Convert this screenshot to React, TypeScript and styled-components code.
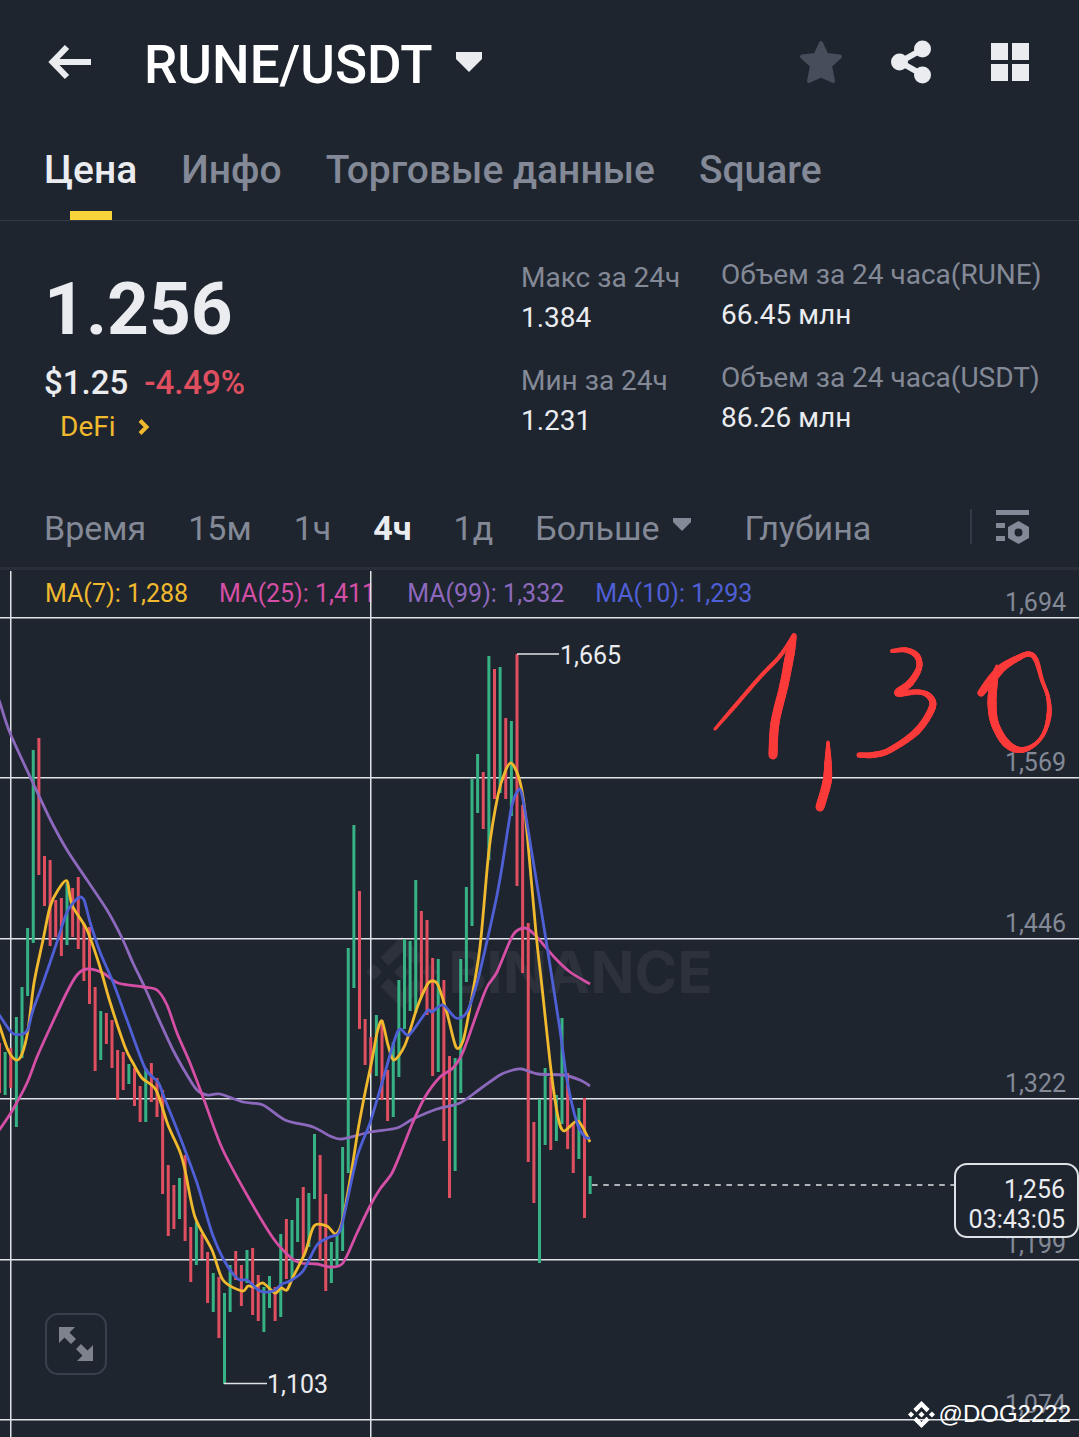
import React from 'react';
import styled, { createGlobalStyle } from 'styled-components';

const color = {
  bg: '#1f252f',
  text: '#eaecf0',
  muted: '#838996',
  dim: '#474d5b',
  line: '#343a45',
  band: '#292e3a',
  grid: '#dfe2e6',
  accent: '#f8d33a',
  yellow: '#f0b92e',
  up: '#36b284',
  down: '#e04f60',
  pink: '#d44fa5',
  violet: '#8d69bd',
  blue: '#4f5fd6',
  pen: '#fb3a3a',
};

const GlobalStyle = createGlobalStyle`
  *, *::before, *::after { box-sizing: border-box; }
  body {
    margin: 0;
    background: ${color.bg};
    color: ${color.text};
    font-family: Roboto, 'Noto Sans', sans-serif;
  }
  button { font: inherit; color: inherit; background: none; border: 0; padding: 0; cursor: pointer; }
  svg { display: block; }
`;

const Page = styled.main`
  display: flex;
  flex-direction: column;
  min-height: 100vh;
`;

const Header = styled.header`
  display: flex;
  align-items: center;
  height: 124px;
  padding: 0 48px;
`;

const PairButton = styled.button`
  display: flex;
  align-items: center;
  gap: 23px;
  margin-left: 52px;
`;

const PairName = styled.h1`
  margin: 0;
  font-size: 53px;
  line-height: 60px;
  font-weight: 500;
  color: #fff;
  padding-top: 5px;
`;

const HeaderActions = styled.div`
  display: flex;
  align-items: center;
  gap: 48px;
  margin-left: auto;
`;

const IconButton = styled.button`
  display: flex;
  align-items: center;
  justify-content: center;
`;

const Tabs = styled.nav`
  display: flex;
  gap: 44px;
  height: 97px;
  padding: 0 44px;
  border-bottom: 1px solid ${color.line};
`;

const Tab = styled.button<{ $active?: boolean }>`
  position: relative;
  height: 96px;
  padding-bottom: 4px;
  font-size: 39px;
  line-height: 44px;
  font-weight: 500;
  color: ${(p) => (p.$active ? color.text : color.muted)};

  &::after {
    content: '';
    position: absolute;
    left: calc(50% - 21px);
    bottom: 0;
    width: 42px;
    height: 9px;
    background: ${(p) => (p.$active ? color.accent : 'transparent')};
  }
`;

const Summary = styled.section`
  display: grid;
  grid-template-columns: 1fr 200px 314px;
  height: 264px;
  padding: 34px 44px 0;
`;

const PriceColumn = styled.div`
  padding-top: 14px;
`;

const Price = styled.div`
  font-size: 73px;
  line-height: 80px;
  font-weight: 700;
`;

const PriceMeta = styled.div`
  display: flex;
  gap: 16px;
  margin-top: 12px;
  font-size: 33px;
  line-height: 44px;
  font-weight: 500;
`;

const Change = styled.span`
  color: ${color.down};
`;

const Category = styled.a`
  display: inline-flex;
  align-items: center;
  gap: 22px;
  padding-left: 16px;
  font-size: 28px;
  line-height: 44px;
  color: ${color.yellow};
  text-decoration: none;
`;

const Stats = styled.dl<{ $offset?: boolean }>`
  margin: 0;
  padding-top: ${(p) => (p.$offset ? '3px' : '0')};
  font-size: 28px;
  line-height: 40px;
  white-space: nowrap;
`;

const StatLabel = styled.dt`
  color: ${color.muted};
`;

const StatValue = styled.dd`
  margin: 0 0 23px;
`;

const Intervals = styled.div`
  display: flex;
  align-items: center;
  gap: 42px;
  height: 85px;
  padding: 0 49px 0 44px;
  border-bottom: 3px solid ${color.band};
`;

const Interval = styled.button<{ $active?: boolean }>`
  display: flex;
  align-items: center;
  gap: 13px;
  padding-top: 4px;
  font-size: 34px;
  line-height: 40px;
  font-weight: ${(p) => (p.$active ? 700 : 400)};
  color: ${(p) => (p.$active ? color.text : color.muted)};
`;

const DepthButton = styled(Interval)`
  margin-left: 10px;
`;

const IntervalTools = styled.div`
  display: flex;
  align-items: center;
  gap: 23px;
  margin-left: auto;
  padding-left: 23px;
  height: 35px;
  border-left: 2px solid ${color.line};
`;

const Chart = styled.section`
  position: relative;
  flex: 1 0 867px;
  overflow: hidden;
`;

const Watermark = styled.div`
  position: absolute;
  top: 364px;
  left: 0;
  right: 0;
  display: flex;
  align-items: center;
  justify-content: center;
  gap: 10px;
  font-family: Inter, sans-serif;
  font-size: 58px;
  line-height: 76px;
  font-weight: 700;
  color: #2c313c;
`;

const Plot = styled.svg`
  position: absolute;
  inset: 0;
  width: 100%;
  height: 100%;
`;

const Legend = styled.div`
  position: relative;
  display: flex;
  gap: 31px;
  padding: 9px 45px 0;
  font-size: 25px;
  line-height: 30px;
`;

const LegendItem = styled.span<{ $color: string }>`
  color: ${(p) => p.$color};
`;

const AxisLabel = styled.span`
  position: absolute;
  right: 13px;
  font-size: 25px;
  line-height: 28px;
  color: ${color.muted};
`;

const LastPrice = styled.div`
  position: absolute;
  top: 593px;
  right: 0;
  padding: 10px 12px 1px 13px;
  border: 2px solid ${color.grid};
  border-radius: 13px;
  background: ${color.bg};
  font-size: 25px;
  line-height: 30px;
  text-align: right;
`;

const ExpandButton = styled.button`
  position: absolute;
  left: 45px;
  top: 743px;
  display: flex;
  align-items: center;
  justify-content: center;
  width: 62px;
  height: 62px;
  border: 2px solid #3a404b;
  border-radius: 13px;
`;

const Author = styled.div`
  position: absolute;
  right: 8px;
  top: 829px;
  display: flex;
  align-items: center;
  gap: 4px;
  font-family: 'Liberation Sans', Arial, sans-serif;
  font-size: 24px;
  line-height: 30px;
  color: #fff;
`;

/* [direction, high, low] for each candle, left to right */
type Candle = ['u' | 'd', number, number];
const candles: Candle[] = [
  ['d', 1043, 1093], ['u', 1052, 1095], ['d', 1048, 1088], ['u', 1017, 1127], ['u', 987, 1058],
  ['u', 928, 996], ['u', 750, 943], ['d', 738, 875], ['d', 856, 906], ['d', 860, 946],
  ['d', 900, 937], ['d', 898, 956], ['u', 883, 945], ['d', 888, 937], ['d', 877, 949],
  ['d', 923, 981], ['d', 927, 1004], ['d', 987, 1071], ['u', 1011, 1060], ['d', 1013, 1044],
  ['d', 1020, 1068], ['d', 1050, 1100], ['d', 1052, 1090], ['u', 1064, 1084], ['d', 1068, 1106],
  ['d', 1086, 1122], ['u', 1068, 1122], ['d', 1063, 1102], ['d', 1078, 1117], ['d', 1090, 1194],
  ['d', 1165, 1236], ['d', 1185, 1229], ['u', 1178, 1219], ['d', 1155, 1241], ['d', 1227, 1282],
  ['u', 1222, 1265], ['d', 1234, 1259], ['d', 1252, 1303], ['u', 1273, 1312], ['d', 1277, 1338],
  ['u', 1293, 1384], ['u', 1265, 1312], ['d', 1251, 1280], ['d', 1265, 1306], ['u', 1250, 1283],
  ['d', 1248, 1315], ['d', 1275, 1321], ['u', 1287, 1332], ['u', 1276, 1308], ['d', 1287, 1321],
  ['u', 1234, 1317], ['d', 1219, 1279], ['u', 1220, 1280], ['u', 1198, 1242], ['d', 1187, 1257],
  ['u', 1193, 1247], ['u', 1134, 1199], ['d', 1155, 1260], ['d', 1194, 1291], ['u', 1242, 1283],
  ['u', 1233, 1267], ['u', 1147, 1251], ['u', 948, 1173], ['u', 825, 988], ['d', 891, 1029],
  ['d', 1019, 1065], ['d', 1037, 1073], ['u', 1015, 1076], ['d', 1020, 1100], ['d', 1070, 1121],
  ['u', 1042, 1117], ['u', 980, 1077], ['u', 939, 1029], ['u', 941, 1011], ['u', 880, 1013],
  ['d', 911, 997], ['d', 920, 1015], ['d', 958, 1076], ['u', 959, 1072], ['d', 980, 1141],
  ['d', 1056, 1198], ['u', 1058, 1171], ['u', 959, 1093], ['u', 887, 982], ['u', 779, 926],
  ['u', 754, 813], ['d', 772, 829], ['u', 656, 860], ['d', 669, 799], ['u', 667, 793],
  ['d', 718, 799], ['u', 721, 816], ['d', 654, 886], ['d', 805, 973], ['d', 923, 1162],
  ['d', 1122, 1203], ['u', 1099, 1263], ['u', 1068, 1145], ['d', 1077, 1150], ['u', 1095, 1141],
  ['u', 1018, 1124], ['d', 1073, 1149], ['d', 1123, 1173], ['u', 1108, 1159], ['d', 1098, 1218],
  ['u', 1176, 1194],
];

type Point = [number, number];
const ma99: Point[] = [
  [-4, 693], [0, 703], [10, 733], [33, 783], [50, 819], [67, 850], [87, 880], [107, 910], [122, 938], [133, 963],
  [145, 988], [160, 1022], [173, 1050], [187, 1075], [197, 1090], [207, 1095], [220, 1094], [243, 1102],
  [263, 1105], [285, 1120], [313, 1127], [330, 1136], [342, 1139], [370, 1132], [397, 1128], [413, 1119],
  [437, 1109], [460, 1103], [480, 1089], [500, 1075], [513, 1070], [522, 1069], [538, 1074], [563, 1075],
  [580, 1080], [590, 1086],
];
const ma25: Point[] = [
  [-3, 1133], [0, 1129], [12, 1111], [27, 1083], [37, 1057], [50, 1028], [67, 992], [77, 975], [87, 969], [103, 973],
  [118, 983], [143, 987], [157, 990], [167, 1005], [177, 1033], [190, 1063], [203, 1097], [222, 1148],
  [247, 1195], [273, 1238], [290, 1257], [300, 1263], [317, 1264], [330, 1267], [343, 1263], [357, 1233],
  [370, 1206], [380, 1189], [392, 1173], [403, 1147], [413, 1122], [425, 1097], [440, 1077], [453, 1068],
  [463, 1052], [477, 1013], [487, 987], [497, 972], [513, 935], [525, 928], [535, 935], [555, 958],
  [570, 972], [590, 984],
];
const ma7: Point[] = [
  [-3, 1018], [0, 1027], [8, 1050], [16, 1060], [22, 1054], [28, 1030], [34, 983], [43, 940], [50, 907], [58, 890],
  [67, 881], [72, 905], [87, 930], [100, 967], [110, 1002], [125, 1047], [133, 1063], [142, 1078],
  [156, 1090], [168, 1125], [180, 1152], [185, 1170], [195, 1217], [212, 1250], [223, 1280], [242, 1291],
  [248, 1286], [255, 1287], [263, 1283], [275, 1293], [281, 1288], [287, 1290], [293, 1277], [305, 1253],
  [314, 1226], [327, 1226], [336, 1234], [343, 1218], [352, 1168], [358, 1130], [365, 1093], [372, 1060],
  [377, 1033], [382, 1021], [388, 1045], [394, 1060], [405, 1045], [417, 1008], [427, 985], [432, 981],
  [438, 985], [447, 1013], [456, 1047], [463, 1041], [470, 1007], [480, 947], [489, 850], [498, 795],
  [505, 772], [511, 763], [518, 775], [523, 797], [527, 832], [536, 933], [542, 987], [551, 1070],
  [558, 1117], [564, 1131], [578, 1121], [590, 1142],
];
const ma10: Point[] = [
  [-3, 1012], [0, 1016], [12, 1033], [23, 1034], [28, 1029], [33, 1010], [43, 983], [57, 942], [67, 912], [78, 898],
  [84, 900], [90, 922], [100, 952], [113, 982], [127, 1020], [145, 1068], [158, 1082], [164, 1097],
  [180, 1137], [197, 1183], [212, 1233], [225, 1262], [238, 1279], [247, 1280], [260, 1291], [273, 1291],
  [282, 1284], [290, 1281], [303, 1271], [317, 1245], [330, 1237], [338, 1234], [343, 1220], [357, 1157],
  [370, 1123], [382, 1083], [398, 1031], [409, 1035], [427, 1011], [432, 1012], [443, 1005], [456, 1018],
  [467, 1012], [477, 983], [485, 950], [496, 900], [502, 867], [511, 810], [517, 792], [522, 795],
  [533, 860], [546, 940], [560, 1030], [567, 1080], [577, 1123], [585, 1137], [590, 1138],
];

/* Smooth curve through the points */
const curve = (p: Point[]) =>
  p.slice(1).reduce((d, [x, y], k) => {
    const [ax, ay] = p[Math.max(k - 1, 0)];
    const [bx, by] = p[k];
    const [cx, cy] = p[Math.min(k + 2, p.length - 1)];
    const c1 = `${bx + (x - ax) / 7} ${by + (y - ay) / 7}`;
    const c2 = `${x - (cx - bx) / 7} ${y - (cy - by) / 7}`;
    return `${d} C${c1} ${c2} ${x} ${y}`;
  }, `M${p[0][0]} ${p[0][1]}`);

/* Pen strokes as [x, y, pressure] */
type Pen = [number, number, number];
const penStrokes: Pen[][] = [
  [[715, 729, 3], [735, 706, 4], [760, 677, 4], [780, 656, 4], [794, 635, 4]],
  [[794, 636, 5], [790, 654, 9], [784, 685, 9], [775, 723, 9], [773, 755, 9]],
  [[828, 742, 3], [828, 763, 7], [827, 782, 9], [820, 807, 9]],
  [[892, 651, 4], [906, 650, 5], [917, 656, 6], [919, 668, 6], [910, 683, 7], [898, 693, 7], [919, 692, 5],
    [930, 697, 6], [932, 708, 7], [917, 731, 7], [890, 750, 6], [873, 755, 6], [859, 755, 5]],
  [[981, 693, 7], [992, 679, 9], [1003, 667, 8], [1018, 658, 6], [1029, 654, 5], [1036, 660, 5], [1042, 680, 4],
    [1048, 697, 4], [1049, 715, 5], [1044, 733, 4], [1034, 745, 4], [1020, 750, 6], [1006, 743, 8],
    [995, 724, 8], [992, 703, 9], [994, 680, 8], [997, 666, 3]],
];

const blend = (a: number, b: number, c: number, d: number, t: number) =>
  0.5 * (2 * b + (c - a) * t + (2 * a - 5 * b + 4 * c - d) * t * t + (3 * b - a - 3 * c + d) * t * t * t);

const trace = (stroke: Pen[]): Pen[] =>
  stroke.slice(1).flatMap((next, k) => {
    const before = stroke[Math.max(k - 1, 0)];
    const from = stroke[k];
    const after = stroke[Math.min(k + 2, stroke.length - 1)];
    return Array.from({ length: 11 }, (_, s) =>
      [0, 1, 2].map((n) => blend(before[n], from[n], next[n], after[n], s / 10)) as Pen,
    );
  });

function PenStroke({ stroke }: { stroke: Pen[] }) {
  const points = trace(stroke);
  return (
    <g stroke={color.pen} strokeLinecap="round">
      {points.slice(1).map(([x, y, w], k) => (
        <line key={k} x1={points[k][0]} y1={points[k][1]} x2={x} y2={y} strokeWidth={w} />
      ))}
    </g>
  );
}

const PLOT_TOP = 570;
const STEP = 5.625;
const gridRows = [
  { label: '1,694', y: 617 },
  { label: '1,569', y: 777 },
  { label: '1,446', y: 938 },
  { label: '1,322', y: 1098 },
  { label: '1,199', y: 1259 },
  { label: '1,074', y: 1419 },
];
const gridColumns = [10, 370];
const averages = [
  { label: 'MA(7): 1,288', color: color.yellow, points: ma7 },
  { label: 'MA(25): 1,411', color: color.pink, points: ma25 },
  { label: 'MA(99): 1,332', color: color.violet, points: ma99 },
  { label: 'MA(10): 1,293', color: color.blue, points: ma10 },
];
const drawOrder = [averages[2], averages[1], averages[0], averages[3]];

function BinanceMark({ size }: { size: number }) {
  return (
    <svg width={size} height={size} viewBox="0 0 24 24" fill="currentColor" aria-hidden="true">
      <path d="M12 0 19.2 7.2 16.5 9.9 12 5.4 7.5 9.9 4.8 7.2ZM2.7 9.3 5.4 12 2.7 14.7 0 12ZM21.3 9.3 24 12 21.3 14.7 18.6 12ZM12 9.3 14.7 12 12 14.7 9.3 12ZM7.5 14.1 12 18.6 16.5 14.1 19.2 16.8 12 24 4.8 16.8Z" />
    </svg>
  );
}

function PriceChart() {
  return (
    <Chart aria-label="График цены">
      <Watermark>
        <BinanceMark size={72} />
        BINANCE
      </Watermark>
      <Legend>
        {averages.map((a) => (
          <LegendItem key={a.label} $color={a.color}>{a.label}</LegendItem>
        ))}
      </Legend>
      {gridRows.map((row) => (
        <AxisLabel key={row.label} style={{ top: row.y - PLOT_TOP - 28 }}>{row.label}</AxisLabel>
      ))}
      <Plot>
        <g transform={`translate(0 ${-PLOT_TOP})`}>
          <g fill={color.grid}>
            {gridRows.map((row) => (
              <rect key={row.y} x="0" y={row.y} width="100%" height="1.5" />
            ))}
            {gridColumns.map((x) => (
              <rect key={x} x={x} y="571" width="1.5" height="100%" />
            ))}
          </g>
          {candles.map(([dir, high, low], i) => (
            <rect
              key={i}
              x={i * STEP - 2}
              y={high}
              width="3"
              height={low - high}
              fill={dir === 'u' ? color.up : color.down}
            />
          ))}
          <g fill="none" strokeWidth="2.8" strokeLinejoin="round">
            {drawOrder.map((a) => (
              <path key={a.label} d={curve(a.points)} stroke={a.color} />
            ))}
          </g>
          <g stroke={color.grid} strokeWidth="1.5">
            <path d="M517 654H559M224 1383.500H267" />
            <line x1="592" y1="1185" x2="100%" y2="1185" strokeDasharray="5.600 5.600" />
          </g>
          <g fill={color.text} fontSize="25">
            <text x="560" y="664">1,665</text>
            <text x="267" y="1393">1,103</text>
          </g>
          {penStrokes.map((stroke, i) => (
            <PenStroke key={i} stroke={stroke} />
          ))}
        </g>
      </Plot>
      <LastPrice>
        <div>1,256</div>
        <div>03:43:05</div>
      </LastPrice>
      <ExpandButton aria-label="На весь экран">
        <svg width="36" height="36" viewBox="0 0 36 36" fill="#7d828c" aria-hidden="true">
          <path d="M1 1H17L11.500 6.500 18 13 13 18 6.500 11.500 1 17ZM35 35H19L24.500 29.500 18 23 23 18 29.500 24.500 35 19Z" />
        </svg>
      </ExpandButton>
      <Author>
        <BinanceMark size={27} />
        <span>@DOG2222</span>
      </Author>
    </Chart>
  );
}

export default function App() {
  return (
    <Page>
      <GlobalStyle />
      <Header>
        <IconButton aria-label="Назад">
          <svg width="44" height="36" viewBox="0 0 44 36" fill="none" stroke={color.text} strokeWidth="6" aria-hidden="true">
            <path d="M43 18H6M19 3 4.500 18 19 33" />
          </svg>
        </IconButton>
        <PairButton>
          <PairName>RUNE/USDT</PairName>
          <svg width="26" height="20" viewBox="0 0 26 20" fill={color.text} aria-hidden="true">
            <path d="M0 0H26V7L13 20 0 7Z" />
          </svg>
        </PairButton>
        <HeaderActions>
          <IconButton aria-label="В избранное">
            <svg width="44" height="44" viewBox="0 0 44 44" fill={color.dim} stroke={color.dim} strokeWidth="4" strokeLinejoin="round" aria-hidden="true">
              <path d="M22 3 27.500 15 41 16.500 31 25.800 34 41 22 35.500 10 41 13 25.800 3 16.500 16.500 15Z" />
            </svg>
          </IconButton>
          <IconButton aria-label="Поделиться">
            <svg width="42" height="44" viewBox="0 0 42 44" fill={color.text} stroke={color.text} aria-hidden="true">
              <path d="M32 9 9 22 32 35" fill="none" strokeWidth="6" />
              <g stroke="none">
                <circle cx="31.500" cy="9" r="8.500" />
                <circle cx="8.500" cy="22" r="8.500" />
                <circle cx="31.500" cy="35" r="8.500" />
              </g>
            </svg>
          </IconButton>
          <IconButton aria-label="Меню">
            <svg width="50" height="38" viewBox="0 0 50 38" fill={color.text} aria-hidden="true">
              <path d="M10 0H27V17H10ZM31 0H48V17H31ZM10 21H27V38H10ZM31 21H48V38H31Z" />
            </svg>
          </IconButton>
        </HeaderActions>
      </Header>

      <Tabs>
        <Tab $active>Цена</Tab>
        <Tab>Инфо</Tab>
        <Tab>Торговые данные</Tab>
        <Tab>Square</Tab>
      </Tabs>

      <Summary>
        <PriceColumn>
          <Price>1.256</Price>
          <PriceMeta>
            <span>$1.25</span>
            <Change>-4.49%</Change>
          </PriceMeta>
          <Category href="#defi">
            DeFi
            <svg width="12" height="16" viewBox="0 0 12 16" fill="none" stroke="currentColor" strokeWidth="4" aria-hidden="true">
              <path d="M2 1.500 8.500 8 2 14.500" />
            </svg>
          </Category>
        </PriceColumn>
        <Stats $offset>
          <StatLabel>Макс за 24ч</StatLabel>
          <StatValue>1.384</StatValue>
          <StatLabel>Мин за 24ч</StatLabel>
          <StatValue>1.231</StatValue>
        </Stats>
        <Stats>
          <StatLabel>Объем за 24 часа(RUNE)</StatLabel>
          <StatValue>66.45 млн</StatValue>
          <StatLabel>Объем за 24 часа(USDT)</StatLabel>
          <StatValue>86.26 млн</StatValue>
        </Stats>
      </Summary>

      <Intervals>
        <Interval>Время</Interval>
        <Interval>15м</Interval>
        <Interval>1ч</Interval>
        <Interval $active>4ч</Interval>
        <Interval>1д</Interval>
        <Interval>
          Больше
          <svg width="20" height="20" viewBox="0 0 20 20" fill={color.muted} aria-hidden="true">
            <path d="M1 0H19V4L10 13 1 4Z" />
          </svg>
        </Interval>
        <DepthButton>Глубина</DepthButton>
        <IntervalTools>
          <IconButton aria-label="Настройки графика">
            <svg width="35" height="35" viewBox="0 0 35 35" fill={color.muted} aria-hidden="true">
              <path d="M1 1H34V6H1ZM1 14H10V19H1ZM1 27H10V32H1Z" />
              <path fillRule="evenodd" d="M23.500 12 34 18V29L23.500 35 13 29V18ZM23.500 19.500A4 4 0 1 0 23.500 27.500 4 4 0 1 0 23.500 19.500Z" />
            </svg>
          </IconButton>
        </IntervalTools>
      </Intervals>

      <PriceChart />
    </Page>
  );
}
